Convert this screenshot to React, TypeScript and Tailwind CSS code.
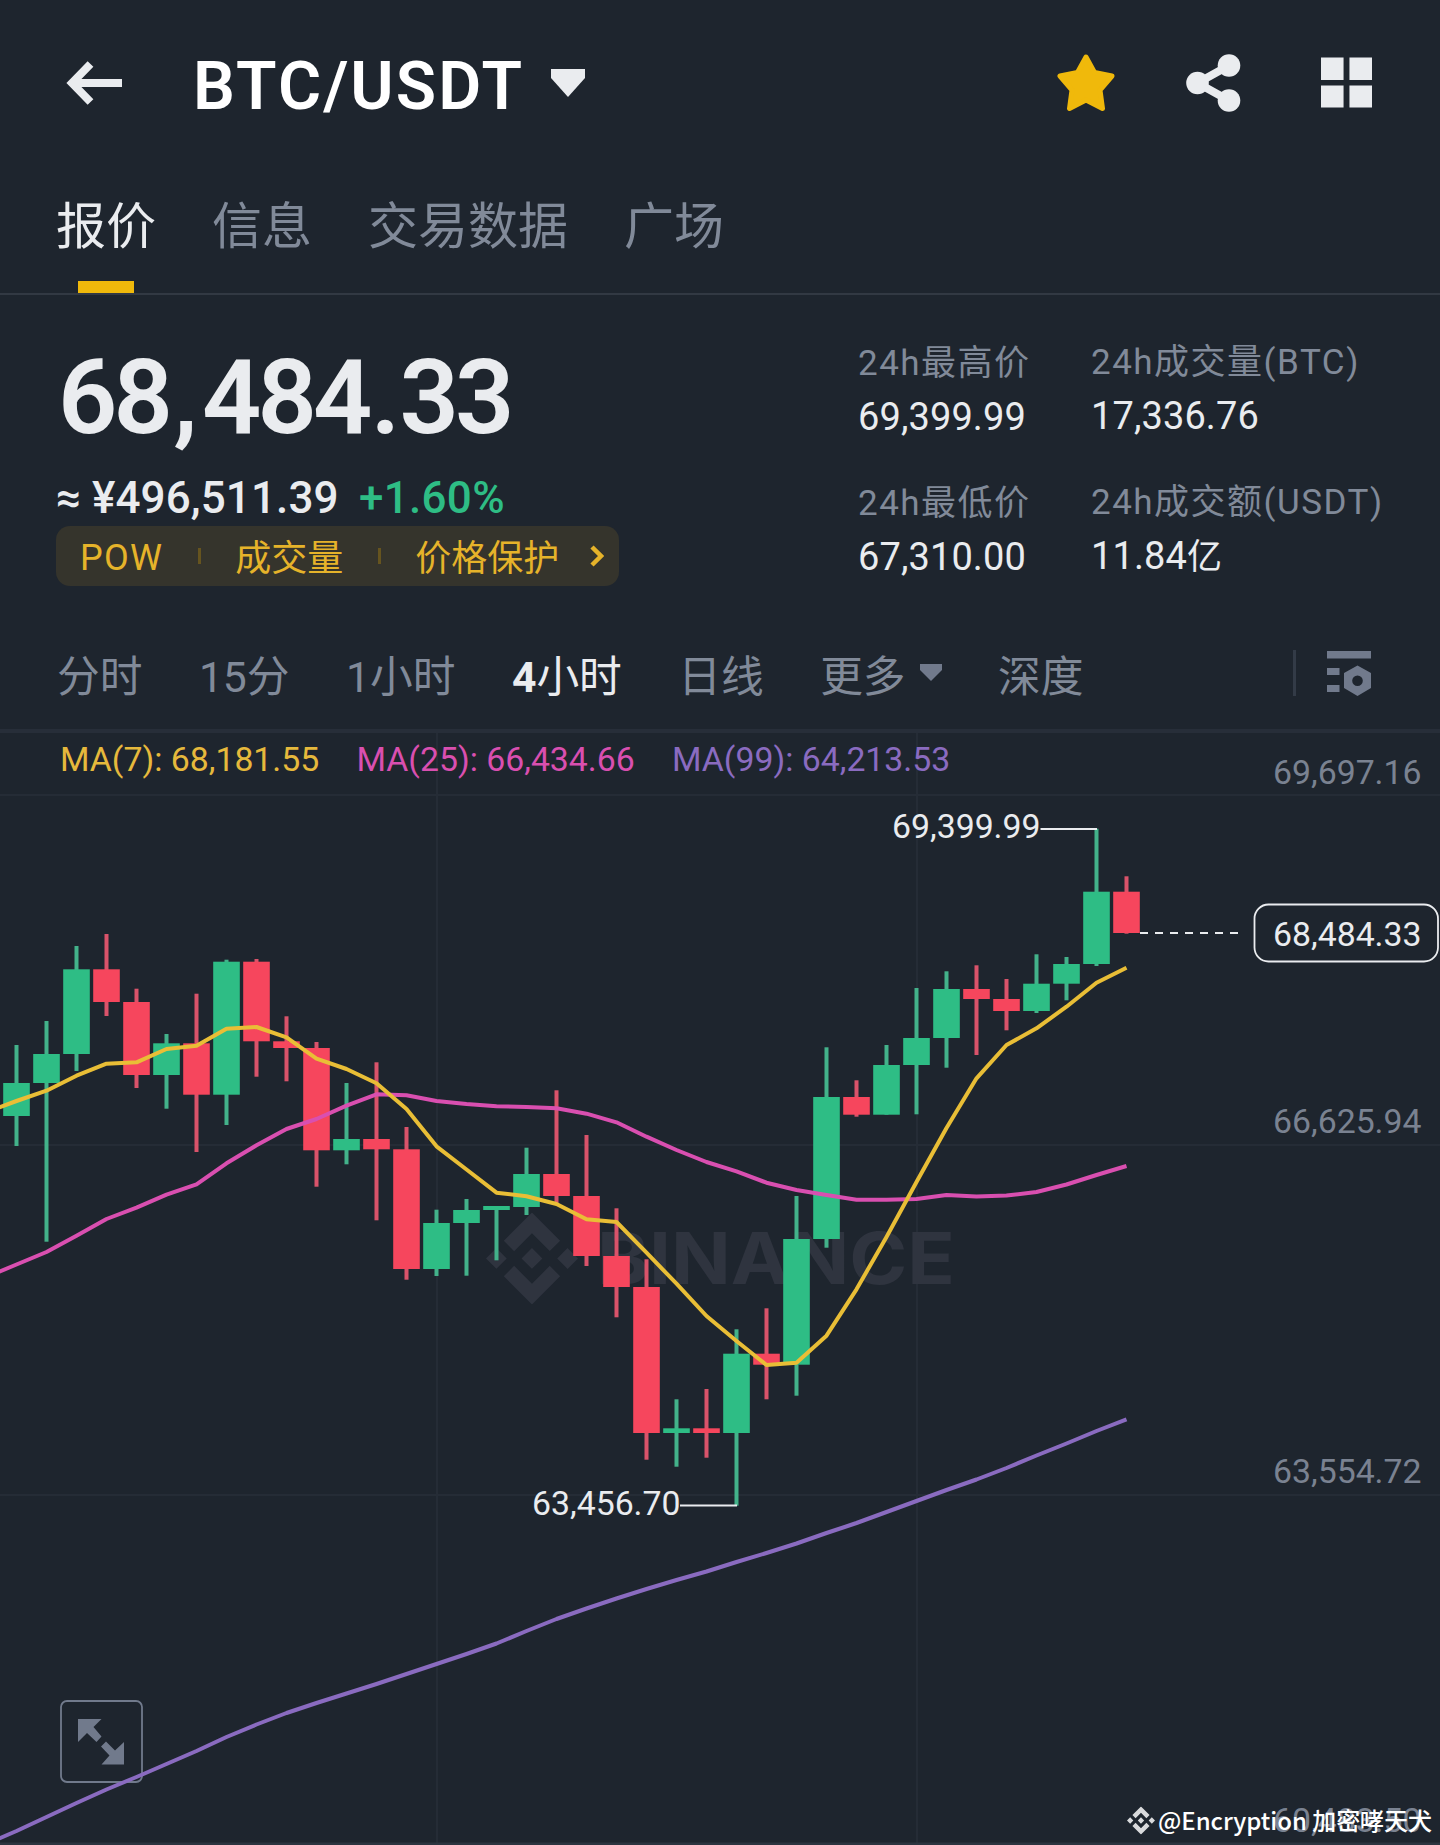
import type { ReactNode } from "react";
import { SiBinance } from "react-icons/si";

type Candle = [up: number, top: number, bottom: number, high: number, low: number];

const tabs = ["报价", "信息", "交易数据", "广场"];

// [up, body top, body bottom, high, low] in chart coordinates
const candles: Candle[] = [
  [1, 1083, 1116, 1045, 1146],
  [1, 1054, 1083, 1021, 1241.7],
  [1, 969.3, 1054, 946, 1071],
  [0, 969.3, 1002, 934, 1016],
  [0, 1002, 1075, 988.7, 1088],
  [1, 1043.3, 1075, 1034, 1108.7],
  [0, 1043.3, 1094.7, 993.7, 1152],
  [1, 961.7, 1094.7, 959.7, 1125],
  [0, 961.7, 1041.3, 959, 1076.7],
  [0, 1041.3, 1048, 1016.3, 1081.3],
  [0, 1048, 1150.3, 1042, 1186.7],
  [1, 1139, 1150.3, 1083, 1164.3],
  [0, 1139, 1149.3, 1062.3, 1220.3],
  [0, 1149.3, 1269, 1127, 1279.7],
  [1, 1223, 1269, 1209.7, 1276],
  [1, 1210, 1223, 1199, 1275.7],
  [1, 1206, 1210, 1206, 1260.3],
  [1, 1174, 1207, 1147.7, 1215],
  [0, 1174, 1196, 1090.3, 1204],
  [0, 1196, 1256, 1135, 1266],
  [0, 1256, 1287, 1208.3, 1317.3],
  [0, 1287, 1433, 1259.3, 1459.7],
  [1, 1428.3, 1433, 1399.3, 1466.7],
  [0, 1428.3, 1433, 1389, 1457.7],
  [1, 1353.7, 1433, 1329.3, 1505.7],
  [0, 1353.7, 1364.7, 1308.3, 1399.3],
  [1, 1239, 1364.7, 1196, 1395.7],
  [1, 1097, 1239, 1047.3, 1247.7],
  [0, 1097, 1114.7, 1080.3, 1116.7],
  [1, 1065, 1114.7, 1045, 1114.7],
  [1, 1038, 1065, 988, 1114.3],
  [1, 989, 1038, 971.3, 1067.7],
  [0, 989, 999, 965.3, 1055],
  [0, 999, 1011, 979, 1030.3],
  [1, 983.7, 1011, 954.3, 1013],
  [1, 964, 983.7, 957, 1000.3],
  [1, 891.7, 964, 828.7, 966],
  [0, 891.7, 933, 876.3, 933.7],
];

const ma7 = [
  1112, 1101, 1090.7, 1075.7, 1063.7, 1062.3, 1049, 1045.7, 1028.7, 1027, 1037.3, 1058.7, 1069,
  1083.3, 1109, 1146.3, 1169.5, 1192.7, 1196.3, 1204, 1219.3, 1222, 1252.7, 1283.7, 1316, 1341,
  1365, 1362.7, 1335.7, 1289.3, 1237, 1182, 1128, 1078.3, 1045, 1028.3, 1006.7, 982.7, 967.7,
];

const ma25 = [
  1277, 1264.5, 1252, 1235.7, 1219, 1207.7, 1194.7, 1184.3, 1163.3, 1145.3, 1129, 1119, 1105.7,
  1094.3, 1095.3, 1101, 1104, 1106.3, 1107, 1108.3, 1113.7, 1122.3, 1136.7, 1150, 1162, 1171.3,
  1182.7, 1190, 1195, 1199.7, 1199.7, 1199, 1195, 1196.5, 1195.5, 1192, 1184.5, 1175, 1166,
];

const ma99 = [
  1844, 1831, 1817, 1803, 1789.5, 1777, 1764, 1751, 1737, 1724.5, 1713, 1703, 1693.5, 1684, 1674,
  1664, 1654, 1643.5, 1631, 1619, 1608.5, 1598.5, 1589, 1580, 1571.5, 1562, 1553, 1543.5, 1533,
  1523, 1512, 1501, 1490, 1479.5, 1468, 1455.5, 1443.5, 1431, 1419.3,
];

const toPoints = (values: number[]) => values.map((y, i) => `${i * 30 - 13.5},${y}`).join(" ");

const indicators = [
  { x: 60, color: "#e6b93c", label: "MA(7): 68,181.55" },
  { x: 356.5, color: "#d94fb0", label: "MA(25): 66,434.66" },
  { x: 672, color: "#8a6bc0", label: "MA(99): 64,213.53" },
];

const priceAxis = [
  { y: 784, label: "69,697.16" },
  { y: 1133, label: "66,625.94" },
  { y: 1483, label: "63,554.72" },
  { y: 1832, label: "60,483.50" },
];

function Header() {
  return (
    <header className="flex h-[164px] items-center pl-[66px] pr-[67px] pt-px">
      <svg className="h-11 w-14" viewBox="0 0 56 44" fill="none" stroke="#eaecef" strokeWidth="8">
        <path d="M56 22H7M24.5 3L6 22L24.5 41" />
      </svg>
      <h1 className="ml-[71px] mt-2 text-[66px] leading-none font-semibold tracking-[2.1px] text-white">
        BTC/USDT
      </h1>
      <svg className="ml-[27px] h-7 w-[34px]" viewBox="0 0 34 28" fill="#eaecef">
        <path d="M0 0H34V9L17 28L0 9Z" />
      </svg>
      <div className="ml-auto flex items-center">
        <svg className="h-[58px] w-[58px]" viewBox="0 0 58 58">
          <path
            d="M29 3L37.5 18.5L55 22L43 36L45.5 54.5L29 46L12.5 54.5L15 36L3 22L20.5 18.5Z"
            fill="#f0b90b"
            stroke="#f0b90b"
            strokeWidth="5"
            strokeLinejoin="round"
          />
        </svg>
        <svg className="ml-[71px] h-[58px] w-[55px]" viewBox="0 0 55 58" fill="#eaecef">
          <circle cx="43" cy="11.5" r="11.3" />
          <circle cx="43" cy="46.5" r="11.3" />
          <circle cx="11.5" cy="29" r="11.3" />
          <path d="M43 11.5L11.5 29L43 46.5" fill="none" stroke="#eaecef" strokeWidth="8" />
        </svg>
        <svg className="ml-[80px] mr-px h-[51px] w-[51px]" viewBox="0 0 52 51" fill="#eaecef">
          <path d="M0 0H23V23H0ZM29 0H52V23H29ZM0 28.5H23V51H0ZM29 28.5H52V51H29Z" />
        </svg>
      </div>
    </header>
  );
}

function Tabs() {
  return (
    <nav className="flex h-[131px] gap-14 border-b-2 border-[#323943] pl-14 pt-[38px] text-[50px] leading-none">
      {tabs.map((tab, i) => (
        <div key={tab} className="flex flex-col items-center">
          <span className={i === 0 ? "text-[#eaecef]" : "text-[#818a99]"}>{tab}</span>
          {i === 0 && <span className="mt-[29px] h-3 w-14 bg-[#f0b90b]" />}
        </div>
      ))}
    </nav>
  );
}

function Stat({ label, value }: { label: string; value: ReactNode }) {
  return (
    <div className="whitespace-nowrap leading-none">
      <div className="text-[35px] tracking-[1.5px] text-[#818a99]">{label}</div>
      <div className="mt-[17px] text-[38px] tracking-[0.1px] text-[#eaecef]">{value}</div>
    </div>
  );
}

function Summary() {
  return (
    <section className="flex h-[291px] pl-14">
      <div className="w-[802px] pt-[51px]">
        <div className="ml-[2px] text-[104px] leading-none font-semibold tracking-[-3.8px] text-[#eaecef]">
          68<span className="ml-[4px] mr-[8px]">,</span>484<span className="mr-[3px] ml-[2px]">.</span>33
        </div>
        <div className="mt-[26px] flex text-[44px] leading-none font-medium">
          <span className="w-[36px] text-[#eaecef]">≈</span>
          <span className="w-[267px] tracking-[0.1px] text-[#eaecef]">¥496,511.39</span>
          <span className="tracking-[0.3px] text-[#2ebd85]">+1.60%</span>
        </div>
        <div className="mt-1.5 flex h-[60px] w-[563px] items-center rounded-[14px] bg-[#35342c] pl-[24px] pr-[15px] text-[36px] leading-none text-[#e6b32a]">
          <span className="mt-1 tracking-[1.3px]">POW</span>
          <span className="ml-[35px] h-4 w-[3px] bg-[#66541f]" />
          <span className="ml-[34px] mt-1.5">成交量</span>
          <span className="ml-[35px] h-4 w-[3px] bg-[#66541f]" />
          <span className="ml-[34px] mt-1.5">价格保护</span>
          <svg className="ml-auto h-[22px] w-[14px]" viewBox="0 0 14 22" fill="none" stroke="#e6b32a" strokeWidth="4.5">
            <path d="M2 2L11 11L2 20" />
          </svg>
        </div>
      </div>
      <div className="flex w-[233px] flex-col gap-[50px] pt-[51px]">
        <Stat label="24h最高价" value="69,399.99" />
        <Stat label="24h最低价" value="67,310.00" />
      </div>
      <div className="flex flex-col gap-[50px] pt-[50px]">
        <Stat label="24h成交量(BTC)" value="17,336.76" />
        <Stat
          label="24h成交额(USDT)"
          value={
            <>
              11.84<span className="text-[35px]">亿</span>
            </>
          }
        />
      </div>
    </section>
  );
}

function Intervals() {
  return (
    <nav className="flex h-[147px] gap-[56.5px] whitespace-nowrap border-b-4 border-[#272e39] pl-[57px] pr-[69px] pt-[70px] text-[42.7px] leading-none text-[#818a99]">
      <span>分时</span>
      <span>15分</span>
      <span>1小时</span>
      <span className="text-[#eaecef]">
        <b>4</b>小时
      </span>
      <span>日线</span>
      <span className="flex gap-[14px]">
        更多
        <svg className="mt-2 h-[17px] w-[22px]" viewBox="0 0 22 17" fill="#717a8c">
          <path d="M0 0H22V6L11 17L0 6Z" />
        </svg>
      </span>
      <span>深度</span>
      <div className="-mt-1.5 ml-auto flex h-[46px]">
        <span className="mr-[31px] h-[46px] w-[3px] bg-[#333b47]" />
        <svg className="h-[46px] w-11" viewBox="0 0 44 46" fill="#717a8c">
          <path d="M0 1H44V8.5H0ZM0 18H12.5V25H0ZM0 35H12.5V42H0Z" />
          <path
            fillRule="evenodd"
            d="M30.5 15.5L44 23V38L30.5 46L17 38V23ZM30.5 25.5A5.3 5.3 0 1 0 30.5 36.1A5.3 5.3 0 1 0 30.5 25.5Z"
          />
        </svg>
      </div>
    </nav>
  );
}

function Chart() {
  return (
    <svg className="block h-[1112px] w-full" viewBox="0 733 1440 1112" fontSize="33.8">
      {/* Grid */}
      <path
        d="M0 795H1440M0 1145H1440M0 1495H1440M437 733V1845M917 733V1845"
        stroke="#252c36"
        strokeWidth="2"
      />
      <path d="M0 1844H1440" stroke="#2c343f" strokeWidth="3" />

      {/* Watermark */}
      <SiBinance x={486} y={1212.5} size={92} color="#2f343f" />
      <text
        x="597"
        y="1283.5"
        fontSize="71"
        fontWeight="700"
        fill="#2f343f"
        textLength="358"
        lengthAdjust="spacingAndGlyphs"
        className="font-[Inter]"
      >
        BINANCE
      </text>

      {/* Expand button */}
      <rect x="61" y="1701" width="81" height="81" rx="6" fill="none" stroke="#717a8c" strokeWidth="1.8" />
      <path
        d="M78 1719H101.5L93.5 1727L101.5 1736.5L96.5 1742L87 1733L78 1742ZM124 1764.5H101.5L109.5 1755.5L101 1746.5L106 1741.5L115 1750.5L124 1742Z"
        fill="#717a8c"
      />

      {/* Candles */}
      {candles.map(([up, top, bottom, high, low], i) => {
        const x = 16.5 + i * 30;
        return (
          <g key={i} fill={up ? "#2ebd85" : "#f6465d"}>
            <rect x={x - 2} y={high} width="4" height={low - high} fill={up ? "#43b28a" : "#d9536a"} />
            <rect x={x - 13.3} y={top} width="26.6" height={bottom - top} />
          </g>
        );
      })}

      {/* Moving averages */}
      <g fill="none" strokeWidth="4" strokeLinejoin="round">
        <polyline points={toPoints(ma99)} stroke="#8a6bc0" />
        <polyline points={toPoints(ma25)} stroke="#d94fb0" />
        <polyline points={toPoints(ma7)} stroke="#e9be36" />
      </g>
      {indicators.map((item) => (
        <text key={item.label} x={item.x} y="771" fill={item.color}>
          {item.label}
        </text>
      ))}

      {/* High, low and last price */}
      <g fill="#eaecef">
        <text x="892" y="838">69,399.99</text>
        <text x="532" y="1514.5">63,456.70</text>
      </g>
      <path d="M1040.5 829H1097M680 1505.5H737" stroke="#eaecef" strokeWidth="2" />
      <path d="M1140 933H1240" stroke="#eaecef" strokeWidth="2" strokeDasharray="8 7" />
      <rect x="1254.5" y="904.5" width="183.5" height="57" rx="14" fill="none" stroke="#eaecef" strokeWidth="1.8" />
      <text x="1273" y="946" fill="#eaecef">68,484.33</text>
      {priceAxis.map((item) => (
        <text key={item.label} x="1273" y={item.y} fill="#7a8291">
          {item.label}
        </text>
      ))}

      {/* Author signature */}
      <SiBinance x={1127} y={1806.5} size={28} color="#d9dadc" />
      <text
        x="1158"
        y="1830"
        fontSize="24"
        fontWeight="500"
        fill="#ffffff"
        textLength="274"
        className="font-['Noto_Sans_CJK_SC',sans-serif]"
      >
        @Encryption 加密哮天犬
      </text>
    </svg>
  );
}

export default function App() {
  return (
    <main className="h-[1845px] w-[1440px] overflow-hidden bg-[#1e252e] font-['Roboto','Noto_Sans_CJK_SC',sans-serif]">
      <Header />
      <Tabs />
      <Summary />
      <Intervals />
      <Chart />
    </main>
  );
}
